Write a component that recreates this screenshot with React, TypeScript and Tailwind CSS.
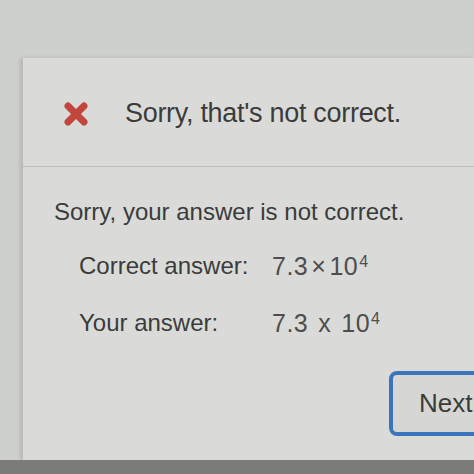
import React from 'react';

// Feedback dialog shown after a wrong answer

const sans = { fontFamily: '"Liberation Sans", Arial, sans-serif' };

function CrossIcon() {
  return (
    <svg width="26" height="26" viewBox="0 0 26 26">
      <path
        d="M5 5 L21 21 M21 5 L5 21"
        stroke="#c2453e"
        strokeWidth="7"
        strokeLinecap="round"
      />
    </svg>
  );
}

function Sci({ mantissa, times, gap }: { mantissa: string; times: string; gap: string }) {
  return (
    <span className="text-[#4d4d4d] text-[25px] tracking-[0.5px]">
      {mantissa}
      <span className={gap}>{times}</span>10
      <sup className="text-[16px] relative -top-[8px] ml-[1px]">4</sup>
    </span>
  );
}

export default function App() {
  return (
    <div
      className="w-[474px] h-[474px] overflow-hidden bg-[#cdd0cd] flex flex-col"
      style={sans}
    >
      <div className="h-[58px] shrink-0" />
      <div className="flex-1 ml-[23px] bg-[#dadbd8] shadow-[-3px_0_4px_rgba(0,0,0,0.12)] flex flex-col">
        <div className="h-[109px] shrink-0 border-b border-[#bdbebb] flex items-center pl-[40px] pt-[3px]">
          <CrossIcon />
          <span className="ml-[36px] text-[27px] text-[#3b3b3b] tracking-[-0.3px]">
            Sorry, that's not correct.
          </span>
        </div>
        <div className="pl-[31px] pt-[32px] text-[#3b3b3b]">
          <div className="text-[24px] leading-[26px]">Sorry, your answer is not correct.</div>
          <div className="pl-[25px] mt-[26px] grid grid-cols-[193px_1fr] gap-y-[27px] text-[24px] leading-[30px]">
            <span>Correct answer:</span>
            <Sci mantissa="7.3" times="×" gap="mx-[3px]" />
            <span>Your answer:</span>
            <Sci mantissa="7.3" times="x" gap="mx-[10px]" />
          </div>
          <div className="flex justify-end mt-[33px]">
            <button className="w-[93px] h-[65px] border-[4px] border-[#3b76bd] rounded-[8px] bg-[#d6d7d4] text-[26px] text-[#3b3b3b] text-left pl-[26px] -mr-[8px]">
              Next
            </button>
          </div>
        </div>
      </div>
      <div className="h-[14px] shrink-0 bg-[#7b7c7a]" />
    </div>
  );
}
